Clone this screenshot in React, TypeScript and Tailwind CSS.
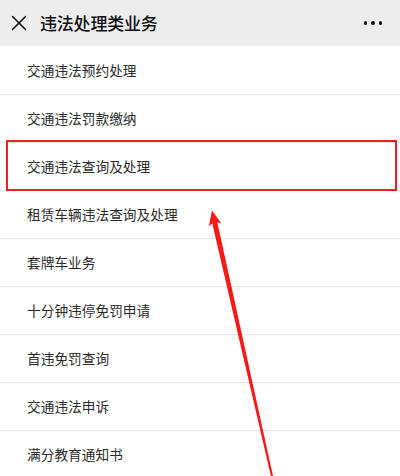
import { X } from 'lucide-react';

const items = [
  '交通违法预约处理',
  '交通违法罚款缴纳',
  '交通违法查询及处理',
  '租赁车辆违法查询及处理',
  '套牌车业务',
  '十分钟违停免罚申请',
  '首违免罚查询',
  '交通违法申诉',
  '满分教育通知书',
];

export default function App() {
  return (
    <div
      className="relative w-[400px] h-[476px] overflow-hidden bg-white"
      style={{ fontFamily: '"Noto Sans CJK SC", "Noto Sans", sans-serif' }}
    >
      {/* 顶部标题栏 */}
      <div className="h-[46px] bg-[#ededed] flex items-center pl-[5.5px] pr-[18px]">
        <X className="w-[26px] h-[26px] text-[#111]" strokeWidth={1.4} />
        <div className="ml-[8.5px] text-[17px] font-medium text-[#111] tracking-[-0.2px]">违法处理类业务</div>
        <div className="ml-auto flex gap-[3.8px] items-center">
          <span className="w-[3.5px] h-[3.5px] rounded-full bg-[#111]" />
          <span className="w-[3.5px] h-[3.5px] rounded-full bg-[#111]" />
          <span className="w-[3.5px] h-[3.5px] rounded-full bg-[#111]" />
        </div>
      </div>

      {/* 列表 */}
      <div className="pt-[1px]">
        {items.map((t) => (
          <div key={t} className="h-[48px] flex items-center pl-[27px] border-b border-[#e4e4e4]">
            <span className="text-[13.7px] text-[#2a2a2a]">{t}</span>
          </div>
        ))}
      </div>

      {/* 红框标注 */}
      <div className="absolute left-[6px] top-[140px] w-[391px] h-[51px] border-2 border-[#f0201e]" />

      {/* 箭头 */}
      <svg className="absolute inset-0" width="400" height="476" viewBox="0 0 400 476">
        <polygon
          points="212,210.5 208.8,226.2 212.3,223.4 271,476.5 273,476 217.3,222.2 221.4,223.6"
          fill="#f51a16"
        />
      </svg>
    </div>
  );
}
